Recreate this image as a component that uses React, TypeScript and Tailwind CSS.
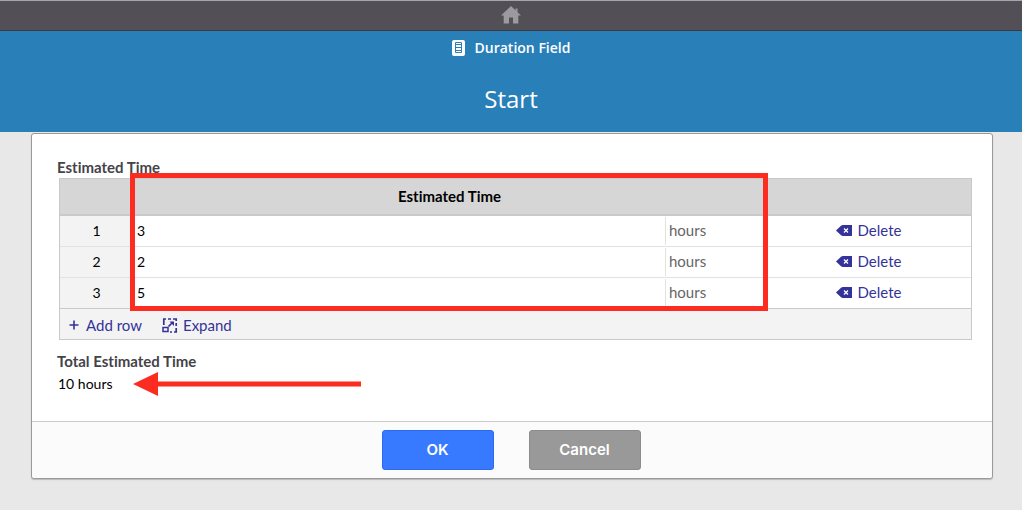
import { useState } from "react";

interface IRow {
  id: number;
  value: string;
}

const initialRows: IRow[] = [
  { id: 1, value: "3" },
  { id: 2, value: "2" },
  { id: 3, value: "5" },
];

const HomeIcon = () => (
  <svg width="20" height="18" viewBox="0 0 20 18" fill="#9b9a9e">
    <path d="M10 0 L20 9.6 H17.3 V17.5 H12 V11.5 H8 V17.5 H2.7 V9.6 H0 Z" />
    <path d="M14.5 2.5h2v5h-2z" />
  </svg>
);

const FormIcon = () => (
  <svg width="13" height="16" viewBox="0 0 13 16">
    <rect width="13" height="16" rx="2" fill="#fff" />
    <path
      d="M3.5 2.5h6v10h-6zM4 4.5h5M4 7.5h5M4 10.5h5"
      fill="none"
      stroke="#2980b9"
    />
  </svg>
);

const DeleteIcon = () => (
  <svg width="16" height="11" viewBox="0 0 16 11">
    <path d="M0 5.5 L5 0.8 Q6 0 7 0 H16 V11 H7 Q6 11 5 10.2 Z" fill="#333399" />
    <path d="M8 3.5l4 4M12 3.5l-4 4" stroke="#fff" strokeWidth="1.3" />
  </svg>
);

const PlusIcon = () => (
  <svg width="10" height="10" viewBox="0 0 10 10">
    <path d="M5 0.5v9M0.5 5h9" stroke="#333399" strokeWidth="1.6" />
  </svg>
);

const ExpandIcon = () => (
  <svg width="16" height="15" viewBox="0 0 16 15" fill="none" stroke="#333399">
    <path
      d="M1.8 7V1H4M6 1h3M11 1h3.2v2M14.2 5v3M14.2 10v4H12M10 14H8"
      strokeWidth="1.7"
    />
    <rect x="1" y="9.5" width="5" height="4" strokeWidth="1.5" />
    <path d="M6.5 8.5l4-4" strokeWidth="1.7" />
    <path d="M7.5 3.5h4.5v4.5z" fill="#333399" stroke="none" />
  </svg>
);

const Arrow = () => (
  <svg width="228" height="24" viewBox="0 0 228 24" fill="#fc2d20">
    <path d="M0 12 L25 0 V9.5 H228 V14.5 H25 V24 Z" />
  </svg>
);

const Header = () => (
  <header>
    <nav className="flex h-[31px] items-center justify-center border-t border-b border-t-[#a3a8ab] border-b-[#3b3a3f] bg-[#525056] pb-px">
      <a href="#home" aria-label="Home">
        <HomeIcon />
      </a>
    </nav>
    <div className="flex h-[101px] flex-col items-center bg-[#2980b9] pt-[7px] font-['Open_Sans',sans-serif] text-white">
      <div className="flex items-center gap-2.5 text-sm leading-5 font-semibold">
        <FormIcon />
        <span>Duration Field</span>
      </div>
      <h1 className="mt-[25px] text-2xl leading-8 font-medium">Start</h1>
    </div>
  </header>
);

const App = () => {
  const [rows, setRows] = useState<IRow[]>(initialRows);
  const total = rows.reduce((sum, row) => sum + Number(row.value), 0);

  const updateRow = (id: number, value: string) =>
    setRows(rows.map((row) => (row.id === id ? { ...row, value } : row)));

  const addRow = () =>
    setRows([
      ...rows,
      { id: Math.max(0, ...rows.map((row) => row.id)) + 1, value: "" },
    ]);

  return (
    <div className="min-h-screen bg-[#e8e8e8] font-['Lato',sans-serif] text-[15px] text-black [font-variant-ligatures:none]">
      <Header />
      <main className="mt-px mr-[29px] ml-[31px] rounded-[3px] border border-[#999] bg-white shadow-[0_1px_1px_#bbb]">
        <div className="px-5 pt-[23px] pb-[25px]">
          <h2 className="mb-px ml-[5px] leading-5 font-bold text-[#444349]">
            Estimated Time
          </h2>
          <div className="relative ml-[7px] border border-[#c9c9c9]">
            <table className="w-full table-fixed border-separate border-spacing-0">
              <colgroup>
                <col className="w-[73px]" />
                <col />
                <col className="w-[101px]" />
                <col className="w-[205px]" />
              </colgroup>
              <thead>
                <tr className="h-[37px] bg-[#d6d6d6] *:border-b-2 *:border-[#c9c9c9] *:p-0">
                  <th />
                  <th colSpan={2} className="font-bold">
                    Estimated Time
                  </th>
                  <th />
                </tr>
              </thead>
              <tbody>
                {rows.map((row, index) => (
                  <tr
                    key={row.id}
                    className="h-[31px] *:border-b *:border-[#e2e2e2] *:p-0 last:*:border-[#c9c9c9]"
                  >
                    <td className="bg-[#f3f3f3] text-center text-sm">
                      {index + 1}
                    </td>
                    <td>
                      <input
                        aria-label={`Estimated time ${index + 1}`}
                        value={row.value}
                        onChange={(e) => updateRow(row.id, e.target.value)}
                        className="block h-[30px] w-full pb-0.5 pl-1 text-sm outline-none"
                      />
                    </td>
                    <td className="text-[#666]">
                      <div className="my-px border-l border-[#e2e2e2] pb-0.5 pl-[3px] leading-[26px]">
                        hours
                      </div>
                    </td>
                    <td className="text-center">
                      <button
                        onClick={() =>
                          setRows(rows.filter((r) => r.id !== row.id))
                        }
                        className="inline-flex items-center gap-1.5 pb-0.5 leading-[26px] text-[#333399]"
                      >
                        <DeleteIcon />
                        Delete
                      </button>
                    </td>
                  </tr>
                ))}
              </tbody>
            </table>
            <div className="flex h-[30px] items-center gap-5 bg-[#f3f3f3] pt-0.5 pl-[9px] text-[#333399]">
              <button onClick={addRow} className="flex items-center gap-[7px]">
                <PlusIcon />
                Add row
              </button>
              <button className="flex items-center gap-[5px]">
                <ExpandIcon />
                Expand
              </button>
            </div>
            {/* highlight frame over the value and unit columns */}
            <div className="pointer-events-none absolute -top-1.5 right-[203px] bottom-7 left-[70px] border-[5px] border-[#fc2d20]" />
          </div>
          <h2 className="mt-[11px] ml-[5px] leading-5 font-bold text-[#444349]">
            Total Estimated Time
          </h2>
          <div className="mt-px ml-1.5 flex items-center gap-5">
            <span className="text-sm">{total} hours</span>
            <Arrow />
          </div>
        </div>
        <footer className="flex justify-center gap-[35px] rounded-b-[3px] border-t border-[#ccc] bg-[#fbfbfb] py-2 pr-0.5 font-['Inter',sans-serif] text-[15px] font-semibold text-white">
          <button className="h-10 w-28 rounded-[3px] border border-[#2a6bf0] bg-[#387aff]">
            OK
          </button>
          <button className="h-10 w-28 rounded-[3px] border border-[#8c8c8c] bg-[#999]">
            Cancel
          </button>
        </footer>
      </main>
    </div>
  );
};

export default App;
